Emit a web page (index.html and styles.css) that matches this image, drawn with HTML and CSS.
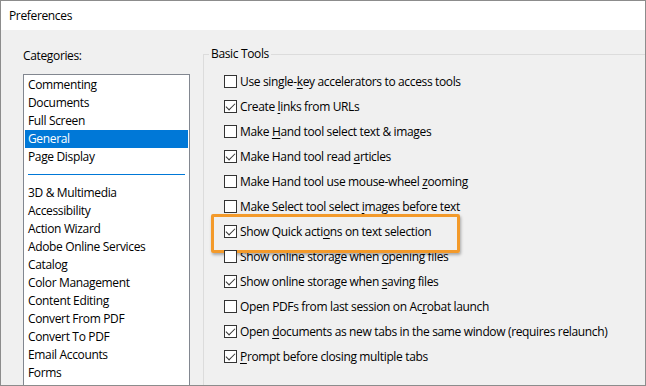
FILE: index.html
```html
<!DOCTYPE html>
<html>
<head>
<meta charset="utf-8">
<link rel="stylesheet" href="styles.css">
</head>
<body>
<div class="window">
  <div class="titlebar">Preferences</div>
  <div class="content">
    <div class="left">
      <div class="cat-label">Categories:</div>
      <div class="listbox">
        <div class="item">Commenting</div>
        <div class="item">Documents</div>
        <div class="item">Full Screen</div>
        <div class="item selected">General</div>
        <div class="item">Page Display</div>
        <div class="sep"></div>
        <div class="item">3D &amp; Multimedia</div>
        <div class="item">Accessibility</div>
        <div class="item">Action Wizard</div>
        <div class="item">Adobe Online Services</div>
        <div class="item">Catalog</div>
        <div class="item">Color Management</div>
        <div class="item">Content Editing</div>
        <div class="item">Convert From PDF</div>
        <div class="item">Convert To PDF</div>
        <div class="item">Email Accounts</div>
        <div class="item">Forms</div>
      </div>
    </div>
    <div class="right">
      <div class="group">
        <div class="legend">Basic Tools</div>
        <div class="rows">
          <div class="row"><span class="box"></span><span>Use single-<u>k</u>ey accelerators to access tools</span></div>
          <div class="row"><span class="box checked"></span><span>Create <u>l</u>inks from URLs</span></div>
          <div class="row"><span class="box"></span><span>Make <u>H</u>and tool select text &amp; images</span></div>
          <div class="row"><span class="box checked"></span><span>Make Hand tool read <u>a</u>rticles</span></div>
          <div class="row"><span class="box"></span><span>Make Hand tool use mouse-wheel <u>z</u>ooming</span></div>
          <div class="row"><span class="box"></span><span>Make Select tool select <u>i</u>mages before text</span></div>
          <div class="row highlight"><span class="box checked"></span><span>Show Quick acti<u>o</u>ns on text selection</span></div>
          <div class="row"><span class="box"></span><span>Show online storage when <u>o</u>pening files</span></div>
          <div class="row"><span class="box checked"></span><span>Show online storage when <u>s</u>aving files</span></div>
          <div class="row"><span class="box"></span><span>Open PDFs from last session on Ac<u>r</u>obat launch</span></div>
          <div class="row"><span class="box checked"></span><span>Open <u>d</u>ocuments as new tabs in the same window (requires relaunch)</span></div>
          <div class="row"><span class="box checked"></span><span><u>P</u>rompt before closing multiple tabs</span></div>
        </div>
      </div>
    </div>
  </div>
</div>
</body>
</html>
```
FILE: styles.css
```css
* { box-sizing: border-box; }
html, body { margin: 0; padding: 0; }
body {
  width: 646px;
  height: 386px;
  overflow: hidden;
  font-family: "Open Sans", "Noto Sans", sans-serif;
  font-size: 12px;
  letter-spacing: -0.35px;
  color: #000;
}
.window {
  width: 646px;
  height: 386px;
  border: 1px solid #8c8c8c;
  display: flex;
  flex-direction: column;
  overflow: hidden;
  background: #f0f0f0;
}
.titlebar {
  height: 29px;
  flex: none;
  background: #fff;
  padding-left: 8px;
  line-height: 29px;
}
.content {
  flex: 1;
  display: flex;
  padding: 16px 0 0 22px;
  overflow: hidden;
}
.left {
  width: 167px;
  flex: none;
  display: flex;
  flex-direction: column;
}
.cat-label {
  height: 28px;
  line-height: 18px;
  padding-top: 1px;
}
.listbox {
  flex: 1;
  background: #fff;
  border: 1px solid #828790;
  border-bottom: none;
  padding: 1px;
}
.item {
  height: 18px;
  line-height: 18px;
  padding-left: 3px;
  white-space: nowrap;
}
.item.selected {
  background: #0078d7;
  color: #fff;
}
.sep {
  height: 18px;
  margin: 0 3px 0 3px;
  position: relative;
}
.sep::after {
  content: "";
  position: absolute;
  left: 0; right: 0;
  top: 8px;
  border-top: 1px solid #0078d7;
}
.right {
  flex: 1;
  padding-left: 13px;
  padding-top: 8px;
}
.group {
  border-left: 1px solid #dcdcdc;
  border-top: 1px solid #dcdcdc;
  height: 400px;
  margin-right: -20px;
  position: relative;
  padding-left: 20px;
  padding-top: 14px;
}
.legend {
  position: absolute;
  top: -10px;
  left: 5px;
  background: #f0f0f0;
  padding: 0 2px;
  line-height: 18px;
}
.rows {
  display: flex;
  flex-direction: column;
}
.row {
  height: 25px;
  display: flex;
  align-items: center;
  white-space: nowrap;
  gap: 3px;
}
.row u { text-decoration: underline; text-underline-offset: 2px; }
.box {
  width: 13px;
  height: 13px;
  border: 1px solid #333;
  background: #fff;
  flex: none;
  position: relative;
}
.box.checked::after {
  content: "";
  position: absolute;
  left: 3px;
  top: 0px;
  width: 4px;
  height: 8px;
  border-right: 1px solid #333;
  border-bottom: 1px solid #333;
  transform: rotate(45deg);
}
.highlight {
  position: relative;
}
.highlight::before {
  content: "";
  position: absolute;
  left: -13px;
  top: -5px;
  width: 243px;
  height: 33px;
  border: 3px solid #f39a2b;
  border-radius: 2px;
  box-shadow: 1px 2px 3px rgba(0,0,0,0.3);
  pointer-events: none;
}
```
